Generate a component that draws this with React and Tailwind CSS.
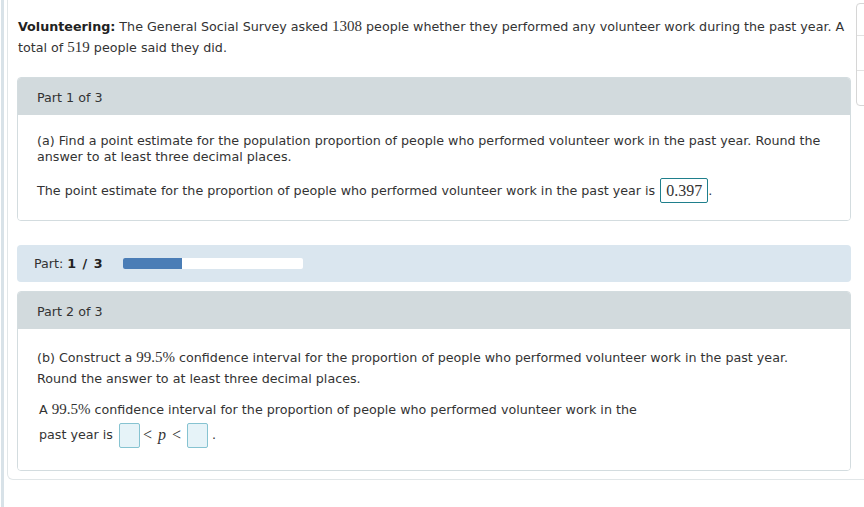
const serif = { fontFamily: '"Liberation Serif", "Times New Roman", serif' };

function Num({ children }) {
  return (
    <span className="text-[15px]" style={serif}>
      {children}
    </span>
  );
}

function PartCard({ title, children }) {
  return (
    <div className="rounded-[4px] border border-[#d3dcdf] overflow-hidden">
      <div className="bg-[#d2dadd] h-[37px] flex items-center pl-[19px] pt-[3px] text-[#333]">{title}</div>
      <div className="bg-white">{children}</div>
    </div>
  );
}

export default function App() {
  return (
    <div
      className="w-[864px] h-[507px] overflow-hidden bg-white flex relative text-[12.7px] text-[#333]"
      style={{ fontFamily: '"DejaVu Sans", Verdana, sans-serif' }}
    >
      {/* left rail */}
      <div className="w-[3px] ml-[1px] h-full bg-[#d8e2e8] shrink-0" />

      {/* question card */}
      <div className="ml-[3px] w-[870px] shrink-0 h-[480px] border border-t-0 border-[#e1e6e8] rounded-b-[6px] pl-[9px] pr-[20px]">
        <p className="pt-[16px] pl-[1px] leading-[21px] w-[830px]">
          <b className="text-[#222]">Volunteering:</b> The General Social Survey asked <Num>1308</Num> people whether
          they performed any volunteer work during the past year. A total of <Num>519</Num> people said they did.
        </p>

        <div className="mt-[19px] w-[834px]">
          <PartCard title="Part 1 of 3">
            <div className="pt-[18px] pb-[17px] pl-[19px] pr-[24px]">
              <p className="leading-[16px]">
                (a) Find a point estimate for the population proportion of people who performed volunteer work in the
                past year. Round the answer to at least three decimal places.
              </p>
              <div className="mt-[13px] flex items-center h-[25px]">
                <span>The point estimate for the proportion of people who performed volunteer work in the past year is</span>
                <span className="ml-[5px] h-[25px] px-[5px] flex items-center border border-[#1f7f8c] rounded-[2px] text-[16px]" style={serif}>
                  0.397
                </span>
                <span>.</span>
              </div>
            </div>
          </PartCard>

          <div className="mt-[24px] h-[37px] rounded-[4px] bg-[#dae6ef] flex items-center pl-[17px]">
            <span className="w-[89px] shrink-0">
              Part: <b className="text-[#222] tracking-[1px]">1 / 3</b>
            </span>
            <div className="w-[180px] h-[11px] bg-white rounded-[2px] overflow-hidden">
              <div className="w-[59px] h-full bg-[#4a7db6]" />
            </div>
          </div>

          <div className="mt-[9px]">
            <PartCard title="Part 2 of 3">
              <div className="pt-[18px] pb-[22px] pl-[19px] pr-[24px]">
                <p className="leading-[21px]">
                  (b) Construct a <Num>99.5%</Num> confidence interval for the proportion of people who performed
                  volunteer work in the past year. Round the answer to at least three decimal places.
                </p>
                <p className="mt-[10px] pl-[2px] leading-[21px]">
                  A <Num>99.5%</Num> confidence interval for the proportion of people who performed volunteer work in the
                </p>
                <div className="pl-[2px] mt-[2px] flex items-center h-[26px]">
                  <span>past year is</span>
                  <span className="ml-[6px] w-[21px] h-[25px] border border-[#86c3d1] bg-[#e6f3f8] rounded-[2px]" />
                  <span className="ml-[3px] mr-[6px] flex items-center gap-[6px] text-[16px]" style={serif}>
                    <span>&lt;</span>
                    <i>p</i>
                    <span>&lt;</span>
                  </span>
                  <span className="w-[21px] h-[25px] border border-[#86c3d1] bg-[#e6f3f8] rounded-[2px]" />
                  <span className="ml-[4px]">.</span>
                </div>
              </div>
            </PartCard>
          </div>
        </div>
      </div>

      {/* side widget, clipped at the window edge */}
      <div className="absolute left-[856px] top-[3px] w-[40px] h-[103px] border border-[#d6d6d6] rounded-[4px] flex flex-col">
        <div className="h-[32px] border-b border-[#e2e2e2]" />
        <div className="h-[35px] border-b border-[#e2e2e2]" />
      </div>
    </div>
  );
}
